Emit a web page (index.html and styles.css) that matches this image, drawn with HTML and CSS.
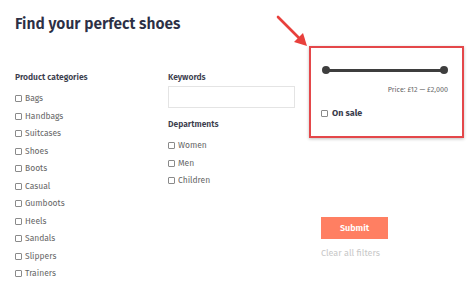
FILE: index.html
```html
<!DOCTYPE html>
<html lang="en">
<head>
<meta charset="utf-8" />
<title>Find your perfect shoes</title>
<link rel="stylesheet" href="styles.css">
</head>
<body>
	<div id="page">
		<h1>Find your perfect shoes</h1>
		<form class="filters">
			<div class="col">
				<h3>Product categories</h3>
				<ul class="checks">
					<li><label><input type="checkbox" /> Bags</label></li>
					<li><label><input type="checkbox" /> Handbags</label></li>
					<li><label><input type="checkbox" /> Suitcases</label></li>
					<li><label><input type="checkbox" /> Shoes</label></li>
					<li><label><input type="checkbox" /> Boots</label></li>
					<li><label><input type="checkbox" /> Casual</label></li>
					<li><label><input type="checkbox" /> Gumboots</label></li>
					<li><label><input type="checkbox" /> Heels</label></li>
					<li><label><input type="checkbox" /> Sandals</label></li>
					<li><label><input type="checkbox" /> Slippers</label></li>
					<li><label><input type="checkbox" /> Trainers</label></li>
				</ul>
			</div>
			<div class="col">
				<h3>Keywords</h3>
				<input class="keywords" type="text" />
				<h3 class="dept">Departments</h3>
				<ul class="checks">
					<li><label><input type="checkbox" /> Women</label></li>
					<li><label><input type="checkbox" /> Men</label></li>
					<li><label><input type="checkbox" /> Children</label></li>
				</ul>
			</div>
			<div class="col col-price">
				<div class="slider">
					<span class="knob"></span>
					<span class="track"></span>
					<span class="knob"></span>
				</div>
				<p class="price">Price: £12 — £2,000</p>
				<label class="sale"><input type="checkbox" /> On sale</label>
				<button class="submit" type="button">Submit</button>
				<a class="clear" href="#">Clear all filters</a>
			</div>
		</form>
	</div>
	<!-- annotation drawn over the page -->
	<div class="highlight"></div>
	<svg class="arrow" width="40" height="40" viewBox="0 0 40 40">
		<line x1="3" y1="3" x2="25" y2="25" stroke="#e8403c" stroke-width="2.6" stroke-linecap="round" />
		<polygon points="32,32 19,28 28,19" fill="#e8403c" />
	</svg>
</body>
</html>
```
FILE: styles.css
```css
*{
	margin:0;
	padding:0;
	list-style:none;
	text-decoration:none;
	box-sizing:border-box;
}
body{
	background:#fff;
	font-family:"Fira Sans","Lato","Open Sans",sans-serif;
	color:#555;
}
#page{
	padding:12px 15px 0;
}
h1{
	font-size:15.5px;
	font-weight:600;
	color:#2c2f45;
	line-height:24px;
}
.filters{
	display:grid;
	grid-template-columns:153px 153px 140px;
	margin-top:35px;
}
h3{
	font-size:8.5px;
	font-weight:600;
	color:#3a3c4c;
	line-height:12px;
}
.checks{
	margin-top:7px;
}
.checks li{
	height:17.5px;
	line-height:17.5px;
	font-size:8.5px;
	color:#666;
}
.checks label{
	display:flex;
	align-items:center;
	gap:3px;
}
input[type=checkbox]{
	-webkit-appearance:none;
	appearance:none;
	width:7px;
	height:7px;
	border:1px solid #8a8a8a;
	border-radius:1px;
	background:#fff;
}
.keywords{
	display:block;
	width:127px;
	height:22px;
	margin-top:3px;
	border:1px solid #e4e4e4;
	outline:none;
}
.dept{
	margin-top:10px;
}
.col-price{
	margin-top:-6px;
}
.slider{
	display:flex;
	align-items:center;
	width:126px;
	height:10px;
	margin-left:1px;
}
.track{
	flex:1;
	height:3px;
	margin:0 -1px;
	background:#3e3e3e;
}
.knob{
	width:8px;
	height:8px;
	border-radius:50%;
	background:#3e3e3e;
}
.price{
	width:127px;
	margin-top:10px;
	font-size:7.2px;
	text-align:right;
	color:#666;
}
.sale{
	display:flex;
	align-items:center;
	gap:4px;
	margin-top:14px;
	font-size:9px;
	font-weight:700;
	color:#3a3c4c;
}
.submit{
	display:block;
	width:67px;
	height:22px;
	margin-top:99px;
	border:none;
	background:#ff7f62;
	color:#fff;
	font-family:inherit;
	font-size:9px;
	font-weight:600;
}
.clear{
	display:block;
	margin-top:9px;
	font-size:9px;
	color:#c8c8c8;
}
.highlight{
	position:absolute;
	left:309px;
	top:46px;
	width:155px;
	height:92px;
	border:2px solid #e4474a;
	box-shadow:0 1px 3px rgba(0,0,0,0.25);
}
.arrow{
	position:absolute;
	left:275px;
	top:14px;
}
```
